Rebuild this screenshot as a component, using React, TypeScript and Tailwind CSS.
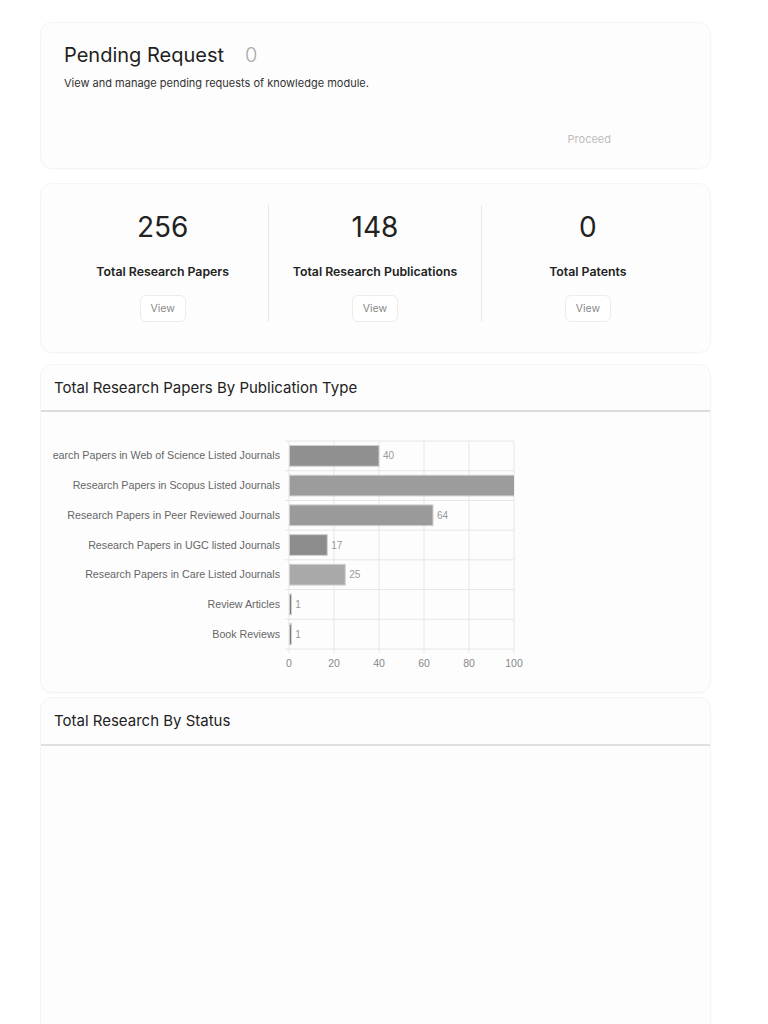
const bars = [
  { label: "Research Papers in Web of Science Listed Journals", value: 40, fill: "#909090" },
  { label: "Research Papers in Scopus Listed Journals", value: 108, fill: "#9c9c9c" },
  { label: "Research Papers in Peer Reviewed Journals", value: 64, fill: "#9a9a9a" },
  { label: "Research Papers in UGC listed Journals", value: 17, fill: "#8c8c8c" },
  { label: "Research Papers in Care Listed Journals", value: 25, fill: "#a9a9a9" },
  { label: "Review Articles", value: 1, fill: "#7a7a7a" },
  { label: "Book Reviews", value: 1, fill: "#7a7a7a" },
];

const stats = [
  { value: "256", label: "Total Research Papers" },
  { value: "148", label: "Total Research Publications" },
  { value: "0", label: "Total Patents" },
];

function PublicationChart() {
  const x0 = 236;
  const scale = 2.25;
  const top = 10;
  const bottom = 218;
  const rowH = (bottom - top) / bars.length;

  return (
    <svg width="480" height="250" className="block" style={{ fontFamily: '"Liberation Sans", Arial, sans-serif' }}>
      <defs>
        <clipPath id="plot">
          <rect x={x0} y={top} width={225} height={bottom - top} />
        </clipPath>
      </defs>
      {/* grid */}
      {[0, 20, 40, 60, 80, 100].map((t) => (
        <line key={t} x1={x0 + t * scale} x2={x0 + t * scale} y1={top} y2={bottom + 4} stroke="#e6e6e6" />
      ))}
      {Array.from({ length: bars.length + 1 }).map((_, i) => (
        <line key={i} x1={x0 - 4} x2={x0 + 225} y1={top + i * rowH} y2={top + i * rowH} stroke="#e6e6e6" />
      ))}
      {/* bars */}
      <g clipPath="url(#plot)">
        {bars.map((b, i) => (
          <rect
            key={b.label}
            x={x0 + 0.5}
            y={top + i * rowH + 4.5}
            width={Math.max(b.value * scale - 0.5, 2)}
            height={rowH - 9}
            fill={b.fill}
            stroke="#cfcfcf"
            strokeWidth="1"
          />
        ))}
      </g>
      {bars.map((b, i) => (
        <text key={b.label} x={227} y={top + i * rowH + rowH / 2 + 3.5} textAnchor="end" fontSize="10.7" fill="#666">
          {b.label}
        </text>
      ))}
      {bars.map((b, i) =>
        b.value <= 100 ? (
          <text key={"v" + i} x={x0 + b.value * scale + 4} y={top + i * rowH + rowH / 2 + 3.5} fontSize="10" fill="#999">
            {b.value}
          </text>
        ) : null
      )}
      {[0, 20, 40, 60, 80, 100].map((t) => (
        <text key={"t" + t} x={x0 + t * scale} y={236} textAnchor="middle" fontSize="10.5" fill="#888">
          {t}
        </text>
      ))}
    </svg>
  );
}

export default function App() {
  return (
    <div className="min-h-screen bg-white pt-[22px] font-['Inter',sans-serif] text-[#222]">
      <div className="ml-[40px] w-[671px] flex flex-col">
        {/* Pending request */}
        <div className="rounded-xl border border-[#f5f5f5] bg-[#fdfdfd] pl-[23px] pr-[99px] pt-[18px] pb-[21px] shadow-[0_1px_2px_rgba(0,0,0,0.02)]">
          <div className="flex items-center gap-[21px]">
            <h2 className="text-[20px] leading-[28px] text-[#1f1f1f]">Pending Request</h2>
            <span className="text-[20px] leading-[28px] font-light text-[#aaa]">0</span>
          </div>
          <p className="mt-[6px] text-[11px] leading-[16px] text-[#333]">
            View and manage pending requests of knowledge module.
          </p>
          <div className="mt-[40px] flex justify-end">
            <button className="text-[11px] leading-[16px] text-[#bdbdbd]">Proceed</button>
          </div>
        </div>

        {/* Stats */}
        <div className="mt-[14px] rounded-xl border border-[#f5f5f5] bg-[#fdfdfd] px-4 pt-[21px] pb-[30px] shadow-[0_1px_2px_rgba(0,0,0,0.02)]">
          <div className="grid grid-cols-3 divide-x divide-[#e8e8e8]">
            {stats.map((s) => (
              <div key={s.label} className="flex flex-col items-center">
                <div className="mt-[5px] text-[28px] leading-[34px] text-[#222]">{s.value}</div>
                <div className="mt-[20px] text-[12.3px] leading-[16px] font-semibold text-[#222]">{s.label}</div>
                <button className="mt-[15px] h-[27px] w-[46px] rounded-md border border-[#ececec] bg-white text-[10.5px] text-[#888]">
                  View
                </button>
              </div>
            ))}
          </div>
        </div>

        {/* Chart card */}
        <div className="mt-[11px] rounded-xl border border-[#f5f5f5] bg-[#fdfdfd] shadow-[0_1px_2px_rgba(0,0,0,0.02)]">
          <div className="h-[47px] border-b-2 border-[#dcdcdc] pl-[13px] pt-[13px]">
            <h3 className="text-[15px] leading-[20px] text-[#222]">Total Research Papers By Publication Type</h3>
          </div>
          <div className="ml-[12px] pt-[19px] pb-[11px] overflow-hidden">
            <PublicationChart />
          </div>
        </div>

        {/* Status card */}
        <div className="mt-[4px] rounded-xl border border-[#f5f5f5] bg-[#fdfdfd] shadow-[0_1px_2px_rgba(0,0,0,0.02)]">
          <div className="h-[48px] border-b-2 border-[#e0e0e0] pl-[13px] pt-[13px]">
            <h3 className="text-[15px] leading-[20px] text-[#222]">Total Research By Status</h3>
          </div>
          <div className="h-[340px]" />
        </div>
      </div>
    </div>
  );
}
